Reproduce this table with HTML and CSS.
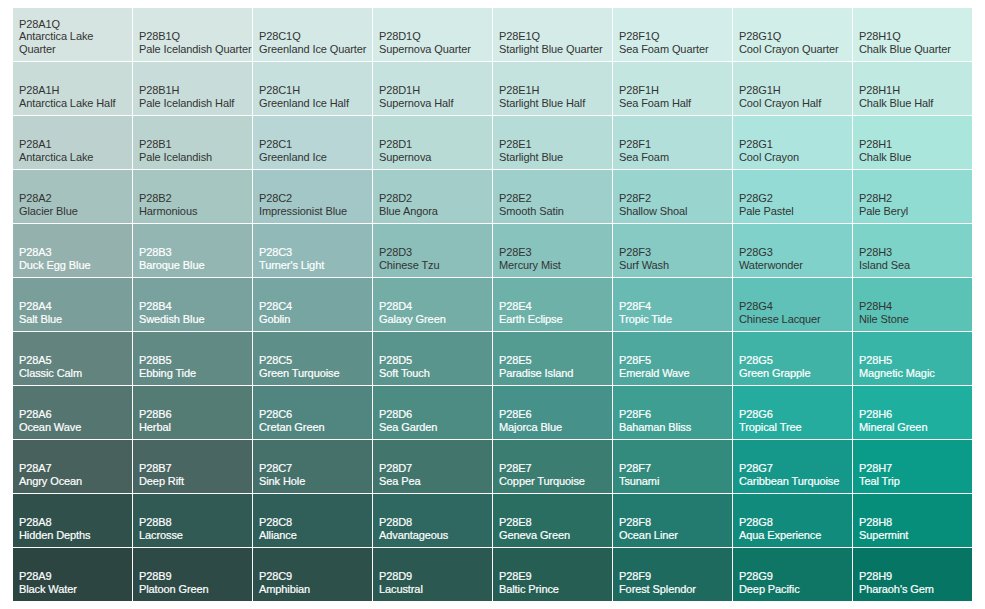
FILE: index.html
```html
<!DOCTYPE html>
<html>
<head>
<meta charset="utf-8">
<link rel="stylesheet" href="styles.css">
</head>
<body>
<div class="chart">
<div class="sw" style="background:#d6e4e1"><span>P28A1Q</span><span>Antarctica Lake<br>Quarter</span></div>
<div class="sw" style="background:#d5e6e3"><span>P28B1Q</span><span>Pale Icelandish Quarter</span></div>
<div class="sw" style="background:#d4e9e6"><span>P28C1Q</span><span>Greenland Ice Quarter</span></div>
<div class="sw" style="background:#d5ebe8"><span>P28D1Q</span><span>Supernova Quarter</span></div>
<div class="sw" style="background:#d4ebe8"><span>P28E1Q</span><span>Starlight Blue Quarter</span></div>
<div class="sw" style="background:#d3eeea"><span>P28F1Q</span><span>Sea Foam Quarter</span></div>
<div class="sw" style="background:#d1eee8"><span>P28G1Q</span><span>Cool Crayon Quarter</span></div>
<div class="sw" style="background:#cfefe8"><span>P28H1Q</span><span>Chalk Blue Quarter</span></div>

<div class="sw" style="background:#c9dcd8"><span>P28A1H</span><span>Antarctica Lake Half</span></div>
<div class="sw" style="background:#c8ddd9"><span>P28B1H</span><span>Pale Icelandish Half</span></div>
<div class="sw" style="background:#c6e0dd"><span>P28C1H</span><span>Greenland Ice Half</span></div>
<div class="sw" style="background:#c6e2df"><span>P28D1H</span><span>Supernova Half</span></div>
<div class="sw" style="background:#c4e3df"><span>P28E1H</span><span>Starlight Blue Half</span></div>
<div class="sw" style="background:#c3e6e1"><span>P28F1H</span><span>Sea Foam Half</span></div>
<div class="sw" style="background:#c1e7e0"><span>P28G1H</span><span>Cool Crayon Half</span></div>
<div class="sw" style="background:#bfe9e1"><span>P28H1H</span><span>Chalk Blue Half</span></div>

<div class="sw" style="background:#bdd2ce"><span>P28A1</span><span>Antarctica Lake</span></div>
<div class="sw" style="background:#bbd3cf"><span>P28B1</span><span>Pale Icelandish</span></div>
<div class="sw" style="background:#b7d6d5"><span>P28C1</span><span>Greenland Ice</span></div>
<div class="sw" style="background:#b8dbd6"><span>P28D1</span><span>Supernova</span></div>
<div class="sw" style="background:#b5dcd7"><span>P28E1</span><span>Starlight Blue</span></div>
<div class="sw" style="background:#b2dfda"><span>P28F1</span><span>Sea Foam</span></div>
<div class="sw" style="background:#ade5de"><span>P28G1</span><span>Cool Crayon</span></div>
<div class="sw" style="background:#abe6dc"><span>P28H1</span><span>Chalk Blue</span></div>

<div class="sw" style="background:#a6c2be"><span>P28A2</span><span>Glacier Blue</span></div>
<div class="sw" style="background:#a6c6c1"><span>P28B2</span><span>Harmonious</span></div>
<div class="sw" style="background:#a3c7c6"><span>P28C2</span><span>Impressionist Blue</span></div>
<div class="sw" style="background:#a2cdc8"><span>P28D2</span><span>Blue Angora</span></div>
<div class="sw" style="background:#9ecfcb"><span>P28E2</span><span>Smooth Satin</span></div>
<div class="sw" style="background:#9ad4cf"><span>P28F2</span><span>Shallow Shoal</span></div>
<div class="sw" style="background:#93dbd4"><span>P28G2</span><span>Pale Pastel</span></div>
<div class="sw" style="background:#90dcd3"><span>P28H2</span><span>Pale Beryl</span></div>

<div class="sw lt" style="background:#94b1ad"><span>P28A3</span><span>Duck Egg Blue</span></div>
<div class="sw lt" style="background:#93b6b3"><span>P28B3</span><span>Baroque Blue</span></div>
<div class="sw lt" style="background:#91b9b7"><span>P28C3</span><span>Turner's Light</span></div>
<div class="sw" style="background:#8dbfba"><span>P28D3</span><span>Chinese Tzu</span></div>
<div class="sw" style="background:#89c3bd"><span>P28E3</span><span>Mercury Mist</span></div>
<div class="sw" style="background:#87cac4"><span>P28F3</span><span>Surf Wash</span></div>
<div class="sw" style="background:#80d1c9"><span>P28G3</span><span>Waterwonder</span></div>
<div class="sw" style="background:#7dd3c8"><span>P28H3</span><span>Island Sea</span></div>

<div class="sw lt" style="background:#7a9e99"><span>P28A4</span><span>Salt Blue</span></div>
<div class="sw lt" style="background:#79a29f"><span>P28B4</span><span>Swedish Blue</span></div>
<div class="sw lt" style="background:#77a5a2"><span>P28C4</span><span>Goblin</span></div>
<div class="sw lt" style="background:#73ada6"><span>P28D4</span><span>Galaxy Green</span></div>
<div class="sw lt" style="background:#6eb1a9"><span>P28E4</span><span>Earth Eclipse</span></div>
<div class="sw lt" style="background:#69bab3"><span>P28F4</span><span>Tropic Tide</span></div>
<div class="sw" style="background:#5fc1b7"><span>P28G4</span><span>Chinese Lacquer</span></div>
<div class="sw" style="background:#5bc3b6"><span>P28H4</span><span>Nile Stone</span></div>

<div class="sw lt" style="background:#62837e"><span>P28A5</span><span>Classic Calm</span></div>
<div class="sw lt" style="background:#628a85"><span>P28B5</span><span>Ebbing Tide</span></div>
<div class="sw lt" style="background:#5f8f89"><span>P28C5</span><span>Green Turquoise</span></div>
<div class="sw lt" style="background:#5a958d"><span>P28D5</span><span>Soft Touch</span></div>
<div class="sw lt" style="background:#549c92"><span>P28E5</span><span>Paradise Island</span></div>
<div class="sw lt" style="background:#4ea89d"><span>P28F5</span><span>Emerald Wave</span></div>
<div class="sw lt" style="background:#41b3a6"><span>P28G5</span><span>Green Grapple</span></div>
<div class="sw lt" style="background:#38b5a6"><span>P28H5</span><span>Magnetic Magic</span></div>

<div class="sw lt" style="background:#557570"><span>P28A6</span><span>Ocean Wave</span></div>
<div class="sw lt" style="background:#557b75"><span>P28B6</span><span>Herbal</span></div>
<div class="sw lt" style="background:#518680"><span>P28C6</span><span>Cretan Green</span></div>
<div class="sw lt" style="background:#4d8c83"><span>P28D6</span><span>Sea Garden</span></div>
<div class="sw lt" style="background:#46918a"><span>P28E6</span><span>Majorca Blue</span></div>
<div class="sw lt" style="background:#3d9e91"><span>P28F6</span><span>Bahaman Bliss</span></div>
<div class="sw lt" style="background:#26ac9e"><span>P28G6</span><span>Tropical Tree</span></div>
<div class="sw lt" style="background:#1faf9f"><span>P28H6</span><span>Mineral Green</span></div>

<div class="sw lt" style="background:#48615c"><span>P28A7</span><span>Angry Ocean</span></div>
<div class="sw lt" style="background:#496662"><span>P28B7</span><span>Deep Rift</span></div>
<div class="sw lt" style="background:#46706a"><span>P28C7</span><span>Sink Hole</span></div>
<div class="sw lt" style="background:#42766d"><span>P28D7</span><span>Sea Pea</span></div>
<div class="sw lt" style="background:#3b7d70"><span>P28E7</span><span>Copper Turquoise</span></div>
<div class="sw lt" style="background:#338b7d"><span>P28F7</span><span>Tsunami</span></div>
<div class="sw lt" style="background:#15988a"><span>P28G7</span><span>Caribbean Turquoise</span></div>
<div class="sw lt" style="background:#0b9c89"><span>P28H7</span><span>Teal Trip</span></div>

<div class="sw lt" style="background:#30504b"><span>P28A8</span><span>Hidden Depths</span></div>
<div class="sw lt" style="background:#325a54"><span>P28B8</span><span>Lacrosse</span></div>
<div class="sw lt" style="background:#305e58"><span>P28C8</span><span>Alliance</span></div>
<div class="sw lt" style="background:#2f6860"><span>P28D8</span><span>Advantageous</span></div>
<div class="sw lt" style="background:#2a6e62"><span>P28E8</span><span>Geneva Green</span></div>
<div class="sw lt" style="background:#237a6e"><span>P28F8</span><span>Ocean Liner</span></div>
<div class="sw lt" style="background:#118b7b"><span>P28G8</span><span>Aqua Experience</span></div>
<div class="sw lt" style="background:#078e7b"><span>P28H8</span><span>Supermint</span></div>

<div class="sw lt" style="background:#2c4541"><span>P28A9</span><span>Black Water</span></div>
<div class="sw lt" style="background:#2d4a46"><span>P28B9</span><span>Platoon Green</span></div>
<div class="sw lt" style="background:#2d504a"><span>P28C9</span><span>Amphibian</span></div>
<div class="sw lt" style="background:#2b5850"><span>P28D9</span><span>Lacustral</span></div>
<div class="sw lt" style="background:#275e54"><span>P28E9</span><span>Baltic Prince</span></div>
<div class="sw lt" style="background:#1f6a5e"><span>P28F9</span><span>Forest Splendor</span></div>
<div class="sw lt" style="background:#0f7666"><span>P28G9</span><span>Deep Pacific</span></div>
<div class="sw lt" style="background:#077564"><span>P28H9</span><span>Pharaoh's Gem</span></div>
</div>
</body>
</html>
```
FILE: styles.css
```css
html, body {
  margin: 0;
  padding: 0;
  background: #ffffff;
}
body {
  font-family: "Liberation Sans", Arial, sans-serif;
  font-size: 11px;
  line-height: 12.5px;
  letter-spacing: -0.1px;
}
.chart {
  display: grid;
  grid-template-columns: repeat(8, 119px);
  grid-auto-rows: 53px;
  gap: 1px;
  margin: 8px 0 0 13px;
  width: max-content;
}
.sw {
  display: flex;
  flex-direction: column;
  justify-content: flex-end;
  padding: 0 0 6px 6px;
  color: #333333;
  overflow: hidden;
  white-space: nowrap;
}
.sw span {
  display: block;
}
.sw.lt {
  color: #ffffff;
  -webkit-text-stroke: 0.2px #ffffff;
}
```
